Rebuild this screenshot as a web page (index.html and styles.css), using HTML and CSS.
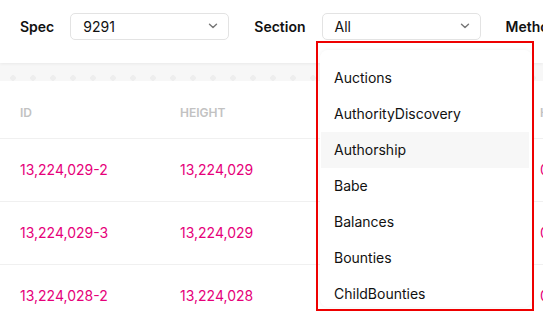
FILE: index.html
```html
<!DOCTYPE html>
<html lang="en">
<head>
    <meta charset="UTF-8">
    <meta name="viewport" content="width=device-width, initial-scale=1.0">
    <title>Extrinsics</title>
    <link rel="stylesheet" href="styles.css">
</head>
<body>
    <div class="filters">
        <div class="filter">
            <span class="filter-label">Spec</span>
            <div class="select">
                <span>9291</span>
                <svg class="chevron" width="10" height="6" viewBox="0 0 10 6"><path d="M1.5 1.2 L5 4.6 L8.5 1.2" fill="none" stroke="#777" stroke-width="1.4" stroke-linecap="round" stroke-linejoin="round"/></svg>
            </div>
        </div>
        <div class="filter">
            <span class="filter-label">Section</span>
            <div class="select">
                <span>All</span>
                <svg class="chevron" width="10" height="6" viewBox="0 0 10 6"><path d="M1.5 1.2 L5 4.6 L8.5 1.2" fill="none" stroke="#777" stroke-width="1.4" stroke-linecap="round" stroke-linejoin="round"/></svg>
            </div>
        </div>
        <div class="filter">
            <span class="filter-label">Method</span>
        </div>
    </div>

    <div class="dots"></div>

    <table class="list">
        <colgroup>
            <col class="col-id">
            <col class="col-wide">
            <col class="col-wide">
            <col class="col-hash">
        </colgroup>
        <thead>
            <tr>
                <th>ID</th>
                <th>Height</th>
                <th></th>
                <th>Hash</th>
            </tr>
        </thead>
        <tbody>
            <tr>
                <td>13,224,029-2</td>
                <td>13,224,029</td>
                <td></td>
                <td>0x6a1f</td>
            </tr>
            <tr>
                <td>13,224,029-3</td>
                <td>13,224,029</td>
                <td></td>
                <td>0x3c92</td>
            </tr>
            <tr>
                <td>13,224,028-2</td>
                <td>13,224,028</td>
                <td></td>
                <td>0x0b7e</td>
            </tr>
        </tbody>
    </table>

    <div class="dropdown">
        <div class="option">Auctions</div>
        <div class="option">AuthorityDiscovery</div>
        <div class="option hover">Authorship</div>
        <div class="option">Babe</div>
        <div class="option">Balances</div>
        <div class="option">Bounties</div>
        <div class="option">ChildBounties</div>
    </div>
    <div class="highlight"></div>
</body>
</html>
```

FILE: styles.css
```css
body {
    font-family: 'Inter', 'Noto Sans', sans-serif;
    margin: 0;
    background-color: #ffffff;
    color: #111111;
    overflow: hidden;
}
.filters {
    display: flex;
    align-items: center;
    height: 52px;
    padding: 0 20px 11px 20px;
    background-color: #ffffff;
    box-shadow: 0 1px 3px rgba(0, 0, 0, 0.06);
    position: relative;
    z-index: 1;
    white-space: nowrap;
}
.filter {
    display: flex;
    align-items: center;
    margin-right: 25px;
}
.filter-label {
    font-size: 14px;
    font-weight: 600;
    margin-right: 16px;
}
.select {
    display: flex;
    align-items: center;
    justify-content: space-between;
    box-sizing: border-box;
    width: 159px;
    height: 27px;
    padding: 0 10px 0 12px;
    border: 1px solid #e3e3e3;
    border-radius: 5px;
    font-size: 14px;
}
.dots {
    height: 18px;
    background-color: #f7f7f7;
    background-image: radial-gradient(circle, #eeeeee 2.6px, transparent 3px);
    background-size: 20px 20px;
    background-position: 3px 5px;
}
.list {
    border-collapse: collapse;
    width: 720px;
    table-layout: fixed;
}
.col-id {
    width: 160px;
}
.col-wide {
    width: 180px;
}
.col-hash {
    width: 200px;
}
.list th {
    text-align: left;
    font-size: 12px;
    font-weight: 600;
    text-transform: uppercase;
    color: #c2c2c2;
    height: 57px;
    padding: 7px 0 0 20px;
    box-sizing: border-box;
    border-bottom: 1px solid #f0f0f0;
}
.list td {
    font-size: 14px;
    color: #e6007a;
    height: 63px;
    padding: 0 0 0 20px;
    box-sizing: border-box;
    border-bottom: 1px solid #f0f0f0;
    white-space: nowrap;
}
.dropdown {
    position: absolute;
    left: 320px;
    top: 50px;
    width: 212px;
    height: 257px;
    box-sizing: border-box;
    padding: 10px 3px 0 1px;
    background-color: #ffffff;
    border-radius: 8px;
    box-shadow: 0 0 4px rgba(0, 0, 0, 0.06);
    overflow: hidden;
    z-index: 2;
}
.option {
    height: 36px;
    line-height: 36px;
    padding-left: 13px;
    font-size: 14px;
    color: #111111;
}
.option.hover {
    background-color: #f7f7f7;
}
.highlight {
    position: absolute;
    left: 316px;
    top: 41px;
    width: 218px;
    height: 270px;
    box-sizing: border-box;
    border: 2px solid #ee0000;
    z-index: 3;
}
```
